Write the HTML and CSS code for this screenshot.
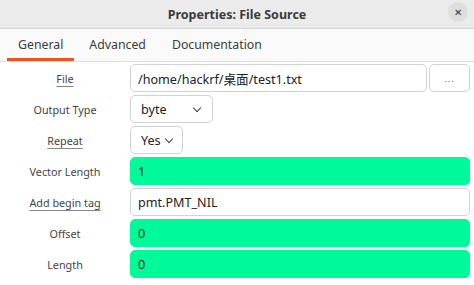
FILE: index.html
```html
<!DOCTYPE html>
<html lang="en">
<head>
    <meta charset="UTF-8">
    <title>Properties: File Source</title>
    <link rel="stylesheet" href="styles.css">
</head>
<body>
    <div class="titlebar">
        <span class="title">Properties: File Source</span>
        <span class="close">&#x2715;</span>
    </div>
    <div class="tabs">
        <span class="tab active">General</span>
        <span class="tab">Advanced</span>
        <span class="tab">Documentation</span>
    </div>
    <div class="form">
        <label class="link">File</label>
        <div class="file-row">
            <div class="field">/home/hackrf/桌面/test1.txt</div>
            <div class="btn">...</div>
        </div>

        <label>Output Type</label>
        <div class="combo wide">byte <span class="chev"></span></div>

        <label class="link">Repeat</label>
        <div class="combo">Yes <span class="chev"></span></div>

        <label>Vector Length</label>
        <div class="field green">1</div>

        <label class="link">Add begin tag</label>
        <div class="field">pmt.PMT_NIL</div>

        <label>Offset</label>
        <div class="field green">0</div>

        <label>Length</label>
        <div class="field green">0</div>
    </div>
</body>
</html>
```

FILE: styles.css
```css
body {
    font-family: "Noto Sans", "Noto Sans CJK SC", sans-serif;
    margin: 0;
    background: #fff;
    color: #333;
}
.titlebar {
    height: 28px;
    background: #ebebeb;
    border-bottom: 1px solid #d4d4d4;
    display: flex;
    align-items: center;
    justify-content: center;
    position: relative;
}
.title {
    font-weight: bold;
    font-size: 12.5px;
    color: #3a3a3a;
}
.close {
    position: absolute;
    right: 6px;
    top: 2px;
    width: 20px;
    height: 20px;
    border-radius: 50%;
    background: #dedede;
    font-size: 10px;
    display: flex;
    align-items: center;
    justify-content: center;
    color: #333;
}
.tabs {
    height: 32px;
    background: #fafafa;
    border-bottom: 1px solid #e0e0e0;
    display: flex;
    padding-left: 7px;
}
.tab {
    font-size: 12.3px;
    padding: 2px 11px 0;
    margin-right: 4px;
    display: flex;
    align-items: center;
    color: #3c3c3c;
    border-bottom: 3px solid transparent;
    box-sizing: border-box;
}
.tab.active {
    border-bottom-color: #e95420;
}
.form {
    display: grid;
    grid-template-columns: 130px 1fr;
    grid-auto-rows: 28px;
    row-gap: 3px;
    padding: 2px 4px 0 0;
}
label {
    font-size: 10.8px;
    color: #444;
    text-align: center;
    align-self: center;
}
label.link {
    text-decoration: underline;
    text-decoration-color: #888;
    text-underline-offset: 3px;
}
.file-row {
    display: flex;
    gap: 2px;
}
.field {
    flex: 1;
    border: 1px solid #d2d2d2;
    border-radius: 5px;
    background: #fff;
    font-size: 12.6px;
    padding: 0 7px;
    display: flex;
    align-items: center;
    color: #222;
}
.field.green {
    background: #00fa9a;
    border-color: #00fa9a;
}
.btn {
    width: 39px;
    border: 1px solid #d2d2d2;
    border-radius: 5px;
    font-size: 9px;
    letter-spacing: 1px;
    color: #555;
    display: flex;
    align-items: center;
    justify-content: center;
}
.combo {
    justify-self: start;
    border: 1px solid #d2d2d2;
    border-radius: 5px;
    font-size: 12.6px;
    padding: 0 10px 0 10px;
    display: flex;
    align-items: center;
    gap: 5px;
    color: #222;
}
.combo.wide {
    width: 83px;
    box-sizing: border-box;
    justify-content: space-between;
    padding-right: 12px;
}
.chev {
    width: 5px;
    height: 5px;
    border-right: 1px solid #444;
    border-bottom: 1px solid #444;
    transform: rotate(45deg);
    margin-top: -3px;
}
```
